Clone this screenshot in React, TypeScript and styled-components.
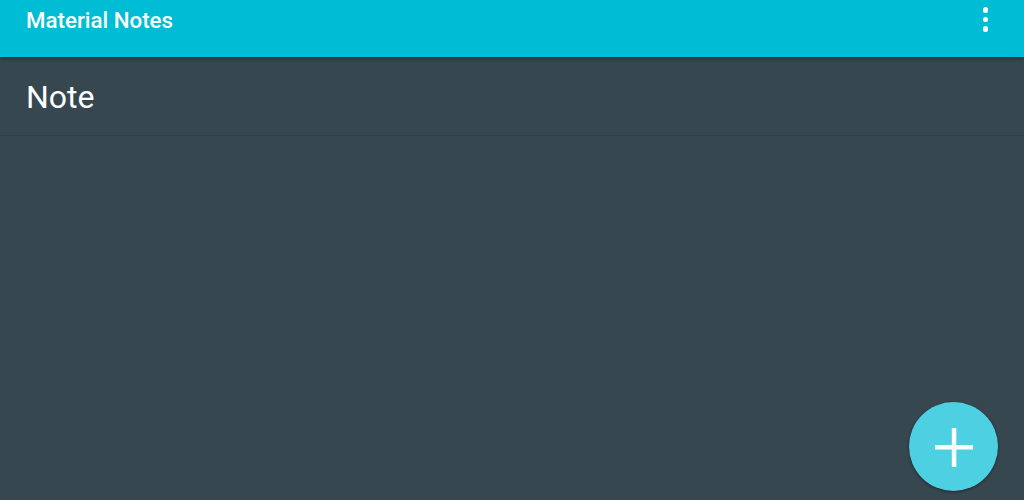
import React from "react";
import styled, { createGlobalStyle } from "styled-components";

const GlobalStyle = createGlobalStyle`
  html, body {
    margin: 0;
    padding: 0;
    background: #37474f;
    font-family: Roboto, "Noto Sans", sans-serif;
  }
`;

const Page = styled.div`
  position: relative;
  display: flex;
  flex-direction: column;
  width: 100vw;
  height: 100vh;
  overflow: hidden;
  background-color: #37474f;
`;

const Toolbar = styled.header`
  position: relative;
  z-index: 1;
  display: flex;
  align-items: center;
  justify-content: space-between;
  height: 57px;
  padding: 0 36px 0 26px;
  box-sizing: border-box;
  background-color: #00bcd4;
  box-shadow: 0 1px 4px rgba(0, 0, 0, 0.45);
`;

const Title = styled.h1`
  margin: 0;
  margin-top: -17px;
  font-size: 22.3px;
  font-weight: 500;
  color: #ffffff;
`;

const MenuButton = styled.button`
  display: flex;
  flex-direction: column;
  align-items: center;
  gap: 4.2px;
  margin-top: -18px;
  padding: 0;
  border: 0;
  background: none;
`;

const Dot = styled.span`
  display: block;
  width: 5.5px;
  height: 5.5px;
  border-radius: 50%;
  background-color: #ffffff;
`;

const NoteList = styled.div`
  display: flex;
  flex-direction: column;
`;

const NoteRow = styled.div`
  display: flex;
  align-items: center;
  height: 76px;
  padding: 2px 26px 0;
  border-bottom: 1px solid #2f3d44;
  font-size: 32px;
  color: #ffffff;
`;

const Fab = styled.button`
  position: absolute;
  left: 909px;
  top: 402px;
  display: flex;
  align-items: center;
  justify-content: center;
  width: 89px;
  height: 89px;
  padding: 0;
  border: 0;
  border-radius: 50%;
  background-color: #4dd0e1;
  box-shadow: 0 1px 3px rgba(0, 0, 0, 0.45);
`;

function PlusIcon() {
  return (
    <svg width="40" height="40" viewBox="0 0 40 40">
      <rect x="1" y="18" width="38" height="4.5" fill="#ffffff" />
      <rect x="17.8" y="1" width="4.5" height="39" fill="#ffffff" />
    </svg>
  );
}

export default function App() {
  return (
    <>
      <GlobalStyle />
      <Page>
        <Toolbar>
          <Title>Material Notes</Title>
          <MenuButton aria-label="More options">
            <Dot />
            <Dot />
            <Dot />
          </MenuButton>
        </Toolbar>
        <NoteList>
          <NoteRow>Note</NoteRow>
        </NoteList>
        <Fab aria-label="Add note">
          <PlusIcon />
        </Fab>
      </Page>
    </>
  );
}
